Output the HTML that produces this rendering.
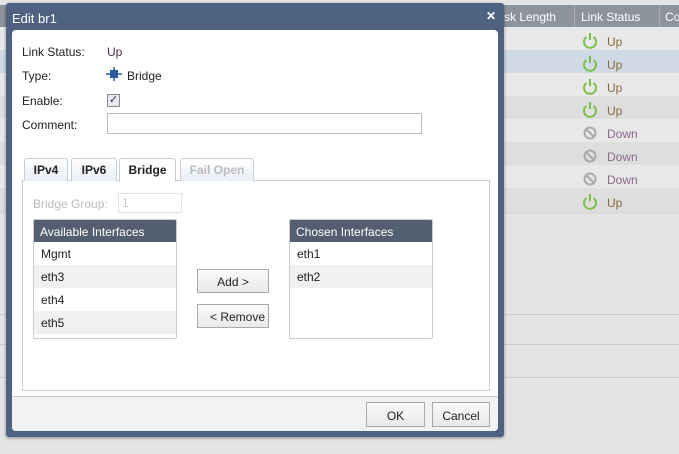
<!DOCTYPE html><html><head><style>
*{box-sizing:border-box}body{margin:0;width:679px;height:454px;background:#e4e4e4;font-family:"Liberation Sans",sans-serif;font-size:12px;color:#222;position:relative;overflow:hidden}
.a{position:absolute}
.row{position:absolute;left:0;width:679px;height:23px}
.st{position:absolute;left:607px;top:5px;font-size:12px}
.up{color:#8a6a3a}.dn{color:#8a6a8a}
.hdr{background:#535f70;color:#fff;font-size:12px;padding:5px 6px;height:22px;font-weight:normal}
.it{height:23px;padding:5px 7px;font-size:12px}
.btn{position:absolute;border:1px solid #a9a9a9;background:linear-gradient(#fafafa,#e9e9e9);text-align:center;font-size:12px;padding-top:5px;overflow:hidden;white-space:nowrap}
.tab{position:absolute;top:158px;height:23px;border:1px solid #c5ccd4;border-bottom:none;border-radius:3px 3px 0 0;background:linear-gradient(#fff,#e8eef5);font-weight:bold;font-size:12px;text-align:center;padding-top:4px}
</style></head><body>
<div class="a" style="left:0;top:5px;width:679px;height:22px;background:#8d939c;color:#fff">
<span class="a" style="left:504px;top:5px">sk Length</span>
<div class="a" style="left:574px;top:0;width:1px;height:22px;background:#a8adb4"></div>
<span class="a" style="left:581px;top:5px">Link Status</span>
<div class="a" style="left:659px;top:0;width:1px;height:22px;background:#a8adb4"></div>
<span class="a" style="left:665px;top:5px">Co</span></div>
<div class="row" style="top:27px;background:#e8e8e8"></div>
<div class="row" style="top:50px;background:#d0dae4"></div>
<div class="row" style="top:73px;background:#e8e8e8"></div>
<div class="row" style="top:96px;background:#dedede"></div>
<div class="row" style="top:119px;background:#e8e8e8"></div>
<div class="row" style="top:142px;background:#dedede"></div>
<div class="row" style="top:165px;background:#e8e8e8"></div>
<div class="row" style="top:188px;background:#dedede"></div>
<div class="a" style="left:0;top:211px;width:679px;height:3px;background:#dadada"></div>
<div class="a" style="left:0;top:314px;width:679px;height:1px;background:#ccc"></div>
<div class="a" style="left:0;top:344px;width:679px;height:1px;background:#ccc"></div>
<div class="a" style="left:0;top:377px;width:679px;height:1px;background:#ccc"></div>
<svg class="a" style="left:0;top:0" width="679" height="220">
<g fill="none" stroke-width="2">
<g stroke="#7bbf4a"><path d="M586.5 37a6 6 0 1 0 7 0M590 33v7"/><path d="M586.5 60a6 6 0 1 0 7 0M590 56v7"/><path d="M586.5 83a6 6 0 1 0 7 0M590 79v7"/><path d="M586.5 106a6 6 0 1 0 7 0M590 102v7"/><path d="M586.5 198a6 6 0 1 0 7 0M590 194v7"/></g>
<g stroke="#aaa"><circle cx="590" cy="133" r="5.5"/><path d="M586 129l8 8"/><circle cx="590" cy="156" r="5.5"/><path d="M586 152l8 8"/><circle cx="590" cy="179" r="5.5"/><path d="M586 175l8 8"/></g></g></svg>
<span class="st up" style="top:35px">Up</span><span class="st up" style="top:58px">Up</span><span class="st up" style="top:81px">Up</span><span class="st up" style="top:104px">Up</span>
<span class="st dn" style="top:127px">Down</span><span class="st dn" style="top:150px">Down</span><span class="st dn" style="top:173px">Down</span><span class="st up" style="top:196px">Up</span>

<div class="a" style="left:6px;top:3px;width:498px;height:434px;background:#4f6281;border-radius:3px;box-shadow:0 1px 3px rgba(0,0,0,.4)">
<span class="a" style="left:6px;top:8px;color:#fff;font-size:13px">Edit br1</span>
<span class="a" style="left:480px;top:6px;color:#fff;font-size:12px;font-weight:bold">✕</span>
<div class="a" style="left:6px;top:27px;width:486px;height:401px;background:#fff;border-radius:4px;overflow:hidden">
<div class="a" style="left:0;top:366px;width:486px;height:35px;background:#f2f2f2;border-top:1px solid #ccc"></div>
</div></div>
<span class="a" style="left:22px;top:45px">Link Status:</span><span class="a" style="left:107px;top:45px;color:#4a2a4a">Up</span>
<span class="a" style="left:22px;top:69px">Type:</span>
<svg class="a" style="left:106px;top:67px" width="16" height="14"><rect x="4" y="3" width="8" height="8" fill="#2a5aa0"/><path d="M0 7h16M8 0v14" stroke="#2a5aa0" stroke-width="1.5"/></svg>
<span class="a" style="left:127px;top:69px">Bridge</span>
<span class="a" style="left:22px;top:94px">Enable:</span>
<div class="a" style="left:107px;top:94px;width:13px;height:13px;border:1px solid #888;background:#e8e8f0;font-size:11px;line-height:11px;text-align:center;color:#335">✓</div>
<span class="a" style="left:22px;top:118px">Comment:</span>
<div class="a" style="left:107px;top:113px;width:315px;height:21px;border:1px solid #bbb"></div>
<div class="a" style="left:22px;top:180px;width:468px;height:211px;border:1px solid #ccc"></div>
<div class="tab" style="left:24px;width:44px">IPv4</div>
<div class="tab" style="left:71px;width:46px">IPv6</div>
<div class="tab" style="left:119px;width:57px;background:#fff;height:24px">Bridge</div>
<div class="tab" style="left:180px;width:74px;color:#bbb">Fail Open</div>
<span class="a" style="left:33px;top:197px;color:#bbb">Bridge Group:</span>
<div class="a" style="left:118px;top:193px;width:64px;height:20px;border:1px solid #e2e2e2;color:#ccc;padding:2px 3px">1</div>
<div class="a" style="left:33px;top:219px;width:144px;height:120px;border:1px solid #ccc;border-radius:2px;overflow:hidden">
<div class="hdr">Available Interfaces</div><div class="it">Mgmt</div><div class="it" style="background:#f0f0f0">eth3</div><div class="it">eth4</div><div class="it" style="background:#f0f0f0">eth5</div></div>
<div class="a" style="left:289px;top:219px;width:144px;height:120px;border:1px solid #ccc;border-radius:2px;overflow:hidden">
<div class="hdr">Chosen Interfaces</div><div class="it">eth1</div><div class="it" style="background:#f0f0f0">eth2</div></div>
<div class="btn" style="left:197px;top:269px;width:72px;height:24px">Add &gt;</div>
<div class="btn" style="left:197px;top:304px;width:72px;height:24px;text-align:left;padding-left:12px">&lt; Remove</div>
<div class="btn" style="left:366px;top:402px;width:59px;height:25px;padding-top:6px">OK</div>
<div class="btn" style="left:432px;top:402px;width:58px;height:25px;padding-top:6px">Cancel</div>
</body></html>
